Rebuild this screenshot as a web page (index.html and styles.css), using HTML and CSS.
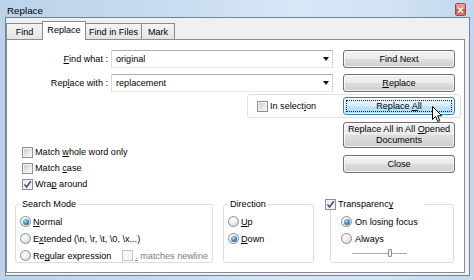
FILE: index.html
```html
<!DOCTYPE html>
<html>
<head>
<meta charset="utf-8">
<title>Replace</title>
<link rel="stylesheet" href="styles.css">
</head>
<body>
<div class="frame">
  <div class="titlebar">
    <span class="title">Replace</span>
    <span class="closebtn"><svg width="7" height="6" viewBox="0 0 7 6"><path d="M1 0.5 L6 5.5 M6 0.5 L1 5.5" stroke="#fff" stroke-width="1.6"/></svg></span>
  </div>
  <div class="client">
    <div class="tabs">
      <div class="tab t-find">Find</div>
      <div class="tab t-replace active">Replace</div>
      <div class="tab t-files">Find in Files</div>
      <div class="tab t-mark">Mark</div>
    </div>
    <div class="panel">
      <div class="row">
        <label class="lbl"><u>F</u>ind what :</label>
        <div class="combo"><span>original</span><i class="arrow"></i></div>
        <button class="btn">Find Next</button>
      </div>
      <div class="row">
        <label class="lbl">Rep<u>l</u>ace with :</label>
        <div class="combo"><span>replacement</span><i class="arrow"></i></div>
        <button class="btn"><u>R</u>eplace</button>
      </div>
      <div class="selrow">
        <div class="selchk"><span class="chk"></span><span>In select<u>i</u>on</span></div>
        <button class="btn hot"><span class="focusrect">Replace <u>A</u>ll</span></button>
      </div>
      <div class="mid">
        <div class="opts">
          <div class="opt"><span class="chk"></span><span>Match <u>w</u>hole word only</span></div>
          <div class="opt"><span class="chk"></span><span>Match <u>c</u>ase</span></div>
          <div class="opt"><span class="chk on"><svg width="9" height="9" viewBox="0 0 9 9"><path d="M1.5 4.5 L3.6 7 L7.8 1.2" fill="none" stroke="#3a4f86" stroke-width="1.5"/></svg></span><span>Wra<u>p</u> around</span></div>
        </div>
        <div class="btncol">
          <button class="btn tall">Replace All in All <u>O</u>pened<br>Documents</button>
          <button class="btn">Close</button>
        </div>
      </div>
      <div class="groups">
        <fieldset class="grp g-search">
          <legend>Search Mode</legend>
          <div class="rrow"><span class="rad on"></span><span><u>N</u>ormal</span></div>
          <div class="rrow"><span class="rad"></span><span>E<u>x</u>tended (\n, \r, \t, \0, \x...)</span></div>
          <div class="rrow"><span class="rx"><span class="rad"></span><span>Re<u>g</u>ular expression</span></span><span class="chk dis"></span><span class="dtext"><u>.</u> matches newline</span></div>
        </fieldset>
        <fieldset class="grp g-dir">
          <legend>Direction</legend>
          <div class="rrow"><span class="rad"></span><span><u>U</u>p</span></div>
          <div class="rrow"><span class="rad on"></span><span><u>D</u>own</span></div>
        </fieldset>
        <fieldset class="grp g-trans">
          <legend><span class="chk on"><svg width="9" height="9" viewBox="0 0 9 9"><path d="M1.5 4.5 L3.6 7 L7.8 1.2" fill="none" stroke="#3a4f86" stroke-width="1.5"/></svg></span><span>Transparenc<u>y</u></span></legend>
          <div class="rrow"><span class="rad on"></span><span>On losing focus</span></div>
          <div class="rrow"><span class="rad"></span><span>Always</span></div>
          <div class="slider"><span class="track"></span><span class="thumb"></span></div>
        </fieldset>
      </div>
    </div>
  </div>
  <svg class="cursor" width="13" height="18" viewBox="0 0 13 18"><path d="M0.5 0.5 L0.5 13.5 L3.6 10.6 L5.8 15.6 L7.8 14.7 L5.7 9.8 L9.8 9.8 Z" fill="#fff" stroke="#000" stroke-width="1" stroke-linejoin="round"/></svg>
</div>
</body>
</html>
```
FILE: styles.css
```css
* { box-sizing: border-box; }
html, body { margin: 0; padding: 0; }
body {
  width: 474px;
  height: 280px;
  overflow: hidden;
  font-family: "Liberation Sans", Arial, sans-serif;
  font-size: 9.1px;
  color: #000;
  background: linear-gradient(to right, #bcd2ea 0%, #c8dbf0 35%, #d8e7f6 62%, #d2e3f4 80%, #c3d8ee 100%);
}
u { text-decoration-skip-ink: none; text-underline-offset: 1px; }
.frame {
  position: relative;
  width: 474px;
  height: 280px;
  display: flex;
  flex-direction: column;
  padding: 0 4px 4px 5px;
}
.titlebar {
  height: 17px;
  display: flex;
  justify-content: space-between;
  align-items: flex-start;
  padding: 0 4px 0 2px;
}
.title {
  font-size: 9.8px;
  line-height: 15px;
  padding-top: 3px;
  color: #000;
}
.closebtn {
  width: 11px;
  height: 13px;
  margin-top: 3px;
  border: 1px solid #9a4a3c;
  border-radius: 2px;
  background: linear-gradient(#e7ac9f 0%, #d67a66 45%, #c7533b 55%, #d5806a 100%);
  display: flex;
  align-items: center;
  justify-content: center;
}
.closebtn svg { display: block; }
.client {
  flex: 1;
  border: 1px solid #6f8399;
  background: #f0f0f0;
  display: flex;
  flex-direction: column;
  padding: 3px 4px 2px 0;
}
.tabs {
  display: flex;
  height: 18px;
  position: relative;
  z-index: 2;
}
.tab {
  height: 16px;
  margin-top: 2px;
  margin-left: -1px;
  border: 1px solid #898c95;
  border-bottom: none;
  background: linear-gradient(#f4f4f4, #e4e4e4);
  text-align: center;
  line-height: 12px;
  padding-top: 2px;
}
.tab.t-find { margin-left: 0; width: 37px; }
.tab.t-replace { width: 44px; }
.tab.t-files { width: 57px; }
.tab.t-mark { width: 34px; }
.tab.active {
  height: 19px;
  margin-top: 0;
  background: #fff;
  position: relative;
  z-index: 3;
}
.panel {
  flex: 1;
  background: #fff;
  border: 1px solid #898c95;
  padding-top: 10px;
  display: flex;
  flex-direction: column;
}
.row {
  display: flex;
  align-items: center;
  height: 18px;
}
.row + .row { margin-top: 6px; }
.lbl {
  width: 101px;
  margin-right: 3px;
  text-align: right;
  white-space: nowrap;
}
.combo {
  width: 222px;
  height: 18px;
  margin-right: 10px;
  border: 1px solid;
  border-color: #abadb3 #d5d9e0 #e3e9ef #d5d9e0;
  background: #fff;
  display: flex;
  align-items: center;
  justify-content: space-between;
  padding: 0 3px 0 4px;
}
.arrow {
  width: 0;
  height: 0;
  border-left: 3.5px solid transparent;
  border-right: 3.5px solid transparent;
  border-top: 4px solid #111;
}
.btn {
  width: 112px;
  height: 18px;
  padding: 0;
  font: inherit;
  color: #000;
  line-height: 11px;
  border: 1px solid #707070;
  border-radius: 3px;
  background: linear-gradient(#f3f3f3 0%, #ebebeb 48%, #dddddd 52%, #cfcfcf 100%);
  box-shadow: inset 0 0 0 1px rgba(255, 255, 255, 0.75);
  text-align: center;
}
.btn.tall { height: 26px; }
.btn.hot {
  border-color: #3c7fb1;
  background: linear-gradient(#eaf6fd 0%, #d9f0fc 48%, #bee6fd 52%, #a7d9f5 100%);
  display: flex;
  padding: 2px;
}
.focusrect {
  flex: 1;
  border: 1px dotted #222;
  line-height: 10px;
}
.selrow {
  margin: 2px 0 0 240px;
  width: 214px;
  height: 24px;
  border: 1px solid #dfe1e4;
  border-radius: 3px;
  display: flex;
  align-items: center;
}
.selchk {
  width: 95px;
  padding-left: 9px;
  display: flex;
  align-items: center;
}
.chk {
  width: 11px;
  height: 11px;
  flex: none;
  margin-right: 2px;
  border: 1px solid #8e8f8f;
  background: linear-gradient(135deg, #c6c9ce 0%, #e6e7e9 55%, #fafafa 100%);
  box-shadow: inset 0 0 0 1px #f2f2f2;
  display: flex;
  align-items: center;
  justify-content: center;
}
.chk svg { display: block; }
.chk.on { background: linear-gradient(135deg, #e6e7ea, #fbfbfb); }
.chk.dis {
  border-color: #c2c4c6;
  background: #f6f6f6;
  box-shadow: none;
  margin-right: 2px;
}
.mid {
  display: flex;
  margin-top: 4px;
}
.opts {
  width: 336px;
  padding: 22px 0 0 15px;
}
.opt {
  height: 16px;
  display: flex;
  align-items: center;
}
.btncol {
  display: flex;
  flex-direction: column;
  gap: 7px;
}
.groups {
  display: flex;
  align-items: flex-start;
  margin-top: 7px;
  padding-left: 8px;
}
.grp {
  margin: 0;
  min-width: 0;
  height: 64px;
  border: 1px solid #d5dfe5;
  border-radius: 3px;
  padding: 3px 4px 0 4px;
}
.grp legend {
  padding: 0 2px;
  line-height: 11px;
  height: 11px;
}
.g-search { width: 198px; }
.g-dir { width: 91px; margin-left: 10px; }
.g-trans { width: 124px; margin-left: 16px; padding-left: 10px; }
.g-trans legend {
  margin-left: -16px;
  padding: 0 32px 0 0;
  display: flex;
  align-items: center;
}
.g-trans legend .chk { margin-right: 2px; }
.rrow {
  height: 17px;
  display: flex;
  align-items: center;
  white-space: nowrap;
}
.rad {
  width: 11px;
  height: 11px;
  flex: none;
  margin-right: 2px;
  border-radius: 50%;
  border: 1px solid #8e8f8f;
  background: radial-gradient(circle at 35% 30%, #ffffff 0%, #eeeff0 45%, #c9cbce 100%);
  display: flex;
  align-items: center;
  justify-content: center;
}
.rad.on::after {
  content: "";
  width: 6px;
  height: 6px;
  border-radius: 50%;
  background: radial-gradient(circle at 40% 35%, #b8e3fb 0%, #3d8fd0 45%, #164a8c 100%);
}
.g-trans .rad { margin-right: 3px; }
.rx {
  width: 104px;
  display: flex;
  align-items: center;
}
.dtext { color: #7c7c7c; }
.slider {
  height: 12px;
  margin-left: 11px;
  width: 55px;
  display: flex;
  align-items: center;
}
.track {
  width: 36px;
  height: 1px;
  background: #a8a8a8;
}
.thumb {
  width: 4px;
  height: 8px;
  border: 1px solid #8c8c8c;
  border-radius: 1px;
  background: #f0f0f0;
}
.slider::after {
  content: "";
  flex: 1;
  height: 1px;
  background: #a8a8a8;
}
.cursor {
  position: absolute;
  left: 432px;
  top: 106px;
}
```
